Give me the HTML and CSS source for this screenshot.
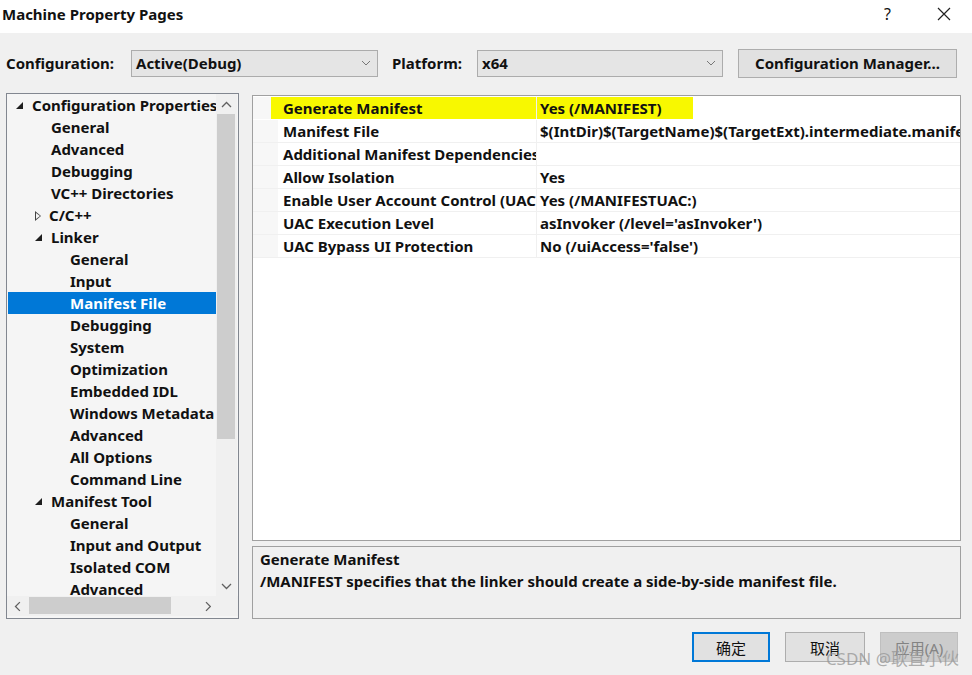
FILE: index.html
```html
<!DOCTYPE html>
<html lang="en">
  <head>
    <meta charset="UTF-8" />
    <title>Machine Property Pages</title>
    <link rel="stylesheet" href="styles.css">
  </head>
  <body>
    <div class="window">
      <div class="titlebar">
        <span class="title">Machine Property Pages</span>
        <span class="help">?</span>
        <svg class="close" width="14" height="14" viewBox="0 0 14 14">
          <path d="M1 1 L13 13 M13 1 L1 13" stroke="#222" stroke-width="1.2" fill="none" />
        </svg>
      </div>

      <div class="toolbar">
        <span class="label">Configuration:</span>
        <div class="combo combo-config">
          <span>Active(Debug)</span>
          <svg width="10" height="6" viewBox="0 0 10 6"><path d="M1 1 L5 5 L9 1" stroke="#777" fill="none" /></svg>
        </div>
        <span class="label label-platform">Platform:</span>
        <div class="combo combo-platform">
          <span>x64</span>
          <svg width="10" height="6" viewBox="0 0 10 6"><path d="M1 1 L5 5 L9 1" stroke="#777" fill="none" /></svg>
        </div>
        <button class="btn btn-manager">Configuration Manager...</button>
      </div>

      <div class="main">
        <div class="tree">
          <div class="tree-body">
            <ul class="tree-list">
              <li class="lvl0"><span class="tri open"></span>Configuration Properties</li>
              <li class="lvl1">General</li>
              <li class="lvl1">Advanced</li>
              <li class="lvl1">Debugging</li>
              <li class="lvl1">VC++ Directories</li>
              <li class="lvl1"><span class="tri closed"></span>C/C++</li>
              <li class="lvl1"><span class="tri open"></span>Linker</li>
              <li class="lvl2">General</li>
              <li class="lvl2">Input</li>
              <li class="lvl2 selected">Manifest File</li>
              <li class="lvl2">Debugging</li>
              <li class="lvl2">System</li>
              <li class="lvl2">Optimization</li>
              <li class="lvl2">Embedded IDL</li>
              <li class="lvl2">Windows Metadata</li>
              <li class="lvl2">Advanced</li>
              <li class="lvl2">All Options</li>
              <li class="lvl2">Command Line</li>
              <li class="lvl1"><span class="tri open"></span>Manifest Tool</li>
              <li class="lvl2">General</li>
              <li class="lvl2">Input and Output</li>
              <li class="lvl2">Isolated COM</li>
              <li class="lvl2">Advanced</li>
            </ul>
            <div class="vscroll">
              <svg class="arrow" width="11" height="7" viewBox="0 0 11 7"><path d="M1 6 L5.5 1.5 L10 6" stroke="#606060" stroke-width="1.3" fill="none" /></svg>
              <div class="vtrack"><div class="vthumb"></div></div>
              <svg class="arrow" width="11" height="7" viewBox="0 0 11 7"><path d="M1 1 L5.5 5.5 L10 1" stroke="#606060" stroke-width="1.3" fill="none" /></svg>
            </div>
          </div>
          <div class="hscroll">
            <svg class="arrow" width="7" height="11" viewBox="0 0 7 11"><path d="M6 1 L1.5 5.5 L6 10" stroke="#606060" stroke-width="1.3" fill="none" /></svg>
            <div class="htrack"><div class="hthumb"></div></div>
            <svg class="arrow" width="7" height="11" viewBox="0 0 7 11"><path d="M1 1 L5.5 5.5 L1 10" stroke="#606060" stroke-width="1.3" fill="none" /></svg>
            <div class="corner"></div>
          </div>
        </div>

        <div class="right">
          <div class="grid">
            <div class="row marked"><span class="name">Generate Manifest</span><span class="value">Yes (/MANIFEST)</span></div>
            <div class="row"><span class="name">Manifest File</span><span class="value">$(IntDir)$(TargetName)$(TargetExt).intermediate.manifest</span></div>
            <div class="row"><span class="name">Additional Manifest Dependencies</span><span class="value"></span></div>
            <div class="row"><span class="name">Allow Isolation</span><span class="value">Yes</span></div>
            <div class="row"><span class="name">Enable User Account Control (UAC)</span><span class="value">Yes (/MANIFESTUAC:)</span></div>
            <div class="row"><span class="name">UAC Execution Level</span><span class="value">asInvoker (/level='asInvoker')</span></div>
            <div class="row"><span class="name">UAC Bypass UI Protection</span><span class="value">No (/uiAccess='false')</span></div>
          </div>
          <div class="desc">
            <div>Generate Manifest</div>
            <div>/MANIFEST specifies that the linker should create a side-by-side manifest file.</div>
          </div>
        </div>
      </div>

      <div class="footer">
        <button class="btn btn-ok">确定</button>
        <button class="btn btn-cancel">取消</button>
        <button class="btn btn-disabled">应用(A)</button>
        <span class="watermark">CSDN @耿直小伙</span>
      </div>
    </div>
  </body>
</html>
```

FILE: styles.css
```css
body {
  margin: 0;
  font-family: "Noto Sans", "Noto Sans CJK SC", sans-serif;
  font-weight: 700;
  font-size: 15px;
  color: #111;
  background: #f0f0f0;
}

.window {
  width: 972px;
  height: 675px;
  background: #f0f0f0;
  position: relative;
  overflow: hidden;
}

.titlebar {
  height: 33px;
  background: #fff;
  display: flex;
  align-items: center;
  padding-left: 2px;
}

.title {
  flex: 1;
  margin-top: -6px;
}

.help {
  font-weight: 400;
  font-size: 16px;
  margin-right: 46px;
  margin-top: -6px;
}

.close {
  margin-right: 21px;
  margin-top: -6px;
}

.toolbar {
  display: flex;
  align-items: center;
  height: 60px;
  padding-left: 6px;
}

.label-platform {
  margin-left: 14px;
}

.combo {
  border: 1px solid #acacac;
  background: #e5e5e5;
  display: flex;
  align-items: center;
  justify-content: space-between;
  padding: 0 6px 0 4px;
  box-sizing: border-box;
  height: 27px;
}

.combo-config {
  margin-left: 17px;
  width: 247px;
}

.combo-platform {
  margin-left: 15px;
  width: 246px;
}

.btn {
  font: inherit;
  color: #111;
  background: #e1e1e1;
  border: 1px solid #adadad;
  padding: 0;
}

.btn-manager {
  margin-left: 15px;
  width: 219px;
  height: 29px;
}

.main {
  display: flex;
  padding-left: 6px;
  height: 526px;
}

.tree {
  width: 231px;
  height: 524px;
  border: 1px solid #828790;
  background: #f5f5f5;
  display: flex;
  flex-direction: column;
}

.tree-body {
  display: flex;
  height: 502px;
  overflow: hidden;
}

.tree-list {
  list-style: none;
  margin: 0;
  padding: 0 0 0 1px;
  width: 208px;
  overflow: hidden;
}

.tree-list li {
  height: 22px;
  line-height: 22px;
  white-space: nowrap;
  overflow: hidden;
  position: relative;
}

.lvl0 {
  padding-left: 24px;
}

.lvl1 {
  padding-left: 43px;
}

.lvl2 {
  padding-left: 62px;
}

.selected {
  background: #0078d7;
  color: #fff;
}

.tri {
  display: inline-block;
  width: 0;
  height: 0;
  margin-left: -16px;
  margin-right: 9px;
  vertical-align: middle;
}

.tri.open {
  border-left: 7px solid transparent;
  border-bottom: 7px solid #1e1e1e;
  margin-top: -3px;
}

.tri.closed {
  width: 5px;
  height: 8px;
  margin-top: -3px;
  position: relative;
}

.tri.closed::before {
  content: "";
  position: absolute;
  left: 0;
  top: 0;
  border-top: 5px solid transparent;
  border-bottom: 5px solid transparent;
  border-left: 6px solid #444;
}

.tri.closed::after {
  content: "";
  position: absolute;
  left: 1px;
  top: 1.5px;
  border-top: 3.5px solid transparent;
  border-bottom: 3.5px solid transparent;
  border-left: 4px solid #f5f5f5;
}

.vscroll {
  width: 21px;
  display: flex;
  flex-direction: column;
  align-items: center;
  background: #f0f0f0;
}

.vscroll .arrow {
  margin: 7px 0 6px;
}

.vtrack {
  flex: 1;
  width: 100%;
  padding: 0 2px 0 1px;
  box-sizing: border-box;
}

.vthumb {
  height: 325px;
  background: #cdcdcd;
}

.hscroll {
  height: 20px;
  display: flex;
  align-items: center;
  background: #f0f0f0;
}

.hscroll .arrow {
  margin: 0 6px 0 7px;
}

.htrack {
  width: 174px;
  height: 100%;
  padding: 1px 0 2px;
  box-sizing: border-box;
}

.hthumb {
  width: 142px;
  height: 100%;
  margin-left: 2px;
  background: #cdcdcd;
}

.corner {
  margin-left: auto;
  width: 21px;
  height: 100%;
  background: #f0f0f0;
}

.right {
  margin-left: 13px;
  width: 709px;
  display: flex;
  flex-direction: column;
}

.grid {
  margin-top: 2px;
  height: 447px;
  border: 1px solid #a0a0a0;
  background: #fff;
  padding-top: 1px;
  box-sizing: border-box;
  overflow: hidden;
}

.row {
  display: flex;
  height: 23px;
  line-height: 22px;
  border-bottom: 1px solid #f0f0f0;
  box-sizing: border-box;
  background: linear-gradient(to right, #f7f7f7 25px, #fff 25px);
  padding-left: 25px;
  white-space: nowrap;
}

.row.marked {
  background: linear-gradient(to right, #f7f7f7 18px, #f8f800 18px, #f8f800 440px, #fff 440px);
  border-bottom-color: #fff;
}

.name {
  flex-shrink: 0;
  width: 259px;
  padding-left: 5px;
  box-sizing: border-box;
  overflow: hidden;
  border-right: 1px solid #f0f0f0;
}

.value {
  padding-left: 3px;
  overflow: hidden;
}

.desc {
  margin-top: 5px;
  height: 73px;
  border: 1px solid #a0a0a0;
  padding: 1px 7px 0;
  line-height: 22px;
  box-sizing: border-box;
}

.footer {
  display: flex;
  justify-content: flex-end;
  align-items: center;
  gap: 15px;
  padding-right: 14px;
  height: 56px;
  position: relative;
}

.footer .btn {
  width: 78px;
  height: 30px;
  font-weight: 400;
}

.footer .btn-cancel {
  width: 80px;
}

.btn-ok {
  border: 2px solid #0078d7 !important;
}

.btn-disabled {
  background: #cccccc !important;
  border-color: #bfbfbf !important;
  color: #838383 !important;
}

.watermark {
  position: absolute;
  right: 13px;
  top: 26px;
  font-weight: 400;
  font-size: 17px;
  color: rgba(150, 150, 150, 0.75);
}
```
